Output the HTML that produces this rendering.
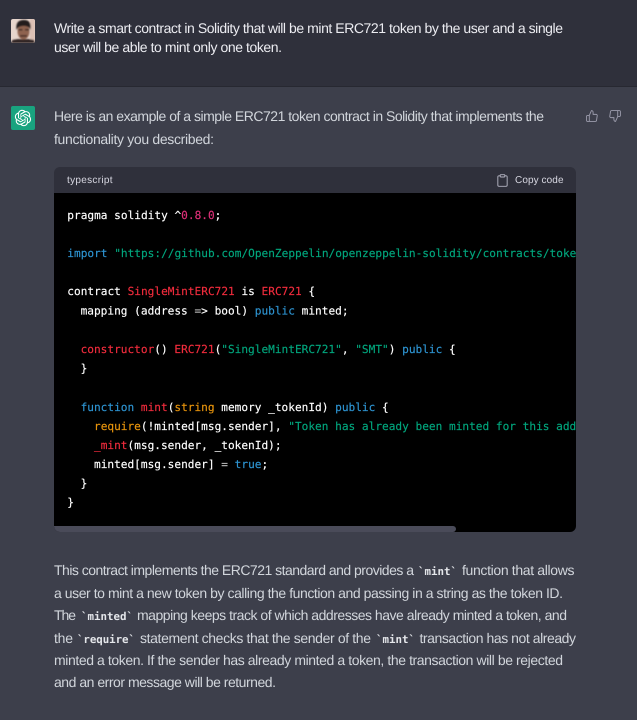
<!DOCTYPE html>
<html><head><meta charset="utf-8"><title>Chat</title>
<style>
html,body{margin:0;padding:0;width:637px;height:720px;overflow:hidden;background:#3d3f4b}
svg{display:block;text-rendering:geometricPrecision}
.s{font-family:"Liberation Sans",sans-serif;font-size:14px;fill:#d1d5db}
.u{fill:#ececf1}
.k{font-family:"DejaVu Sans Mono",monospace;font-size:10.8px;font-weight:700;fill:#e5e7eb}
.c{font-family:"DejaVu Sans Mono",monospace;font-size:11.13px;fill:#fff;white-space:pre;stroke:#fff;stroke-width:.15}
.b{fill:#2e95d3;stroke:#2e95d3}.g{fill:#00a67d;stroke:#00a67d}.r{fill:#f22c3d;stroke:#f22c3d}.p{fill:#df3079;stroke:#df3079}.o{fill:#e9950c;stroke:#e9950c}.q{fill:#b5b5b5;stroke:#b5b5b5}
.h{font-family:"Liberation Sans",sans-serif;font-size:10px;fill:#d9d9e3}
</style></head><body>
<svg width="637" height="720" viewBox="0 0 637 720" xmlns="http://www.w3.org/2000/svg">
<defs>
<filter id="bl" x="-20%" y="-20%" width="140%" height="140%"><feGaussianBlur stdDeviation="0.7"/></filter>
<clipPath id="av"><rect x="11" y="19" width="24" height="24" rx="2"/></clipPath>
</defs>
<rect width="637" height="720" fill="#3d3f4b"/>
<rect width="637" height="86" fill="#2f303b"/>
<rect y="86" width="637" height="1" fill="#272831"/>

<!-- user avatar -->
<g clip-path="url(#av)">
<rect x="11" y="19" width="24" height="24" fill="#e6d5cc"/>
<g filter="url(#bl)">
<rect x="30" y="19" width="5" height="24" fill="#dcc0b4"/>
<ellipse cx="23.5" cy="31.5" rx="6" ry="8" fill="#8f6350"/>
<path d="M16.5 30 C15.5 22 19 20 24 20 C29.5 20 31.5 23 30.5 30 C29.5 27 27 26 24 26 C20 26 18 27 16.5 30Z" fill="#241e1f"/>
<rect x="18.5" y="29" width="4" height="1.4" fill="#2e2020"/>
<rect x="25" y="29" width="4" height="1.4" fill="#2e2020"/>
<rect x="20" y="35" width="7" height="1.8" fill="#4d312b"/>
<path d="M11 43 L12.5 40 C17 39 20 39 23 39.5 C27 39 30 39 34 40 L35 43Z" fill="#2d2321"/>
</g>
</g>
<!-- logo -->
<rect x="11" y="106" width="24" height="24" rx="2" fill="#19a37f"/>
<svg x="14.6" y="109.6" width="16.8" height="16.8" viewBox="0 0 41 41"><path fill="#fff" d="M37.5324 16.8707C37.9808 15.5241 38.1363 14.0974 37.9886 12.6859C37.8409 11.2744 37.3934 9.91076 36.676 8.68622C35.6126 6.83404 33.9882 5.3676 32.0373 4.4985C30.0864 3.62941 27.9098 3.40259 25.8215 3.85078C24.8796 2.7893 23.7219 1.94125 22.4257 1.36341C21.1295 0.785575 19.7249 0.491269 18.3058 0.500197C16.1708 0.495044 14.0893 1.16803 12.3614 2.42214C10.6335 3.67624 9.34853 5.44666 8.6917 7.47815C7.30085 7.76286 5.98686 8.3414 4.8377 9.17505C3.68854 10.0087 2.73073 11.0782 2.02839 12.312C0.956464 14.1591 0.498905 16.2988 0.721698 18.4228C0.944492 20.5467 1.83612 22.5449 3.268 24.1293C2.81966 25.4759 2.66413 26.9026 2.81182 28.3141C2.95951 29.7256 3.40701 31.0892 4.12437 32.3138C5.18791 34.1659 6.8123 35.6322 8.76321 36.5013C10.7141 37.3704 12.8907 37.5973 14.9789 37.1492C15.9208 38.2107 17.0786 39.0587 18.3747 39.6366C19.6709 40.2144 21.0755 40.5087 22.4946 40.4998C24.6307 40.5054 26.7133 39.8321 28.4418 38.5772C30.1704 37.3223 31.4556 35.5506 32.1119 33.5179C33.5027 33.2332 34.8167 32.6547 35.9659 31.821C37.115 30.9874 38.0728 29.9178 38.7752 28.684C39.8458 26.8371 40.3023 24.6979 40.0789 22.5748C39.8556 20.4517 38.9639 18.4544 37.5324 16.8707ZM22.4978 37.8849C20.7443 37.8874 19.0459 37.2733 17.6994 36.1501C17.7601 36.117 17.8666 36.0586 17.936 36.0161L25.9004 31.4156C26.1003 31.3019 26.2663 31.137 26.3813 30.9378C26.4964 30.7386 26.5563 30.5124 26.5549 30.2825V19.0542L29.9213 20.998C29.9389 21.0068 29.9541 21.0198 29.9656 21.0359C29.977 21.052 29.9842 21.0707 29.9867 21.0902V30.3889C29.9842 32.375 29.1946 34.2791 27.7909 35.6841C26.3872 37.0892 24.4838 37.8806 22.4978 37.8849ZM6.39227 31.0064C5.51397 29.4888 5.19742 27.7107 5.49804 25.9832C5.55718 26.0187 5.66048 26.0818 5.73461 26.1244L13.699 30.7248C13.8975 30.8408 14.1233 30.902 14.3532 30.902C14.583 30.902 14.8088 30.8408 15.0073 30.7248L24.731 25.1103V28.9979C24.7321 29.0177 24.7283 29.0376 24.7199 29.0556C24.7115 29.0736 24.6988 29.0893 24.6829 29.1012L16.6317 33.7497C14.9096 34.7416 12.8643 35.0097 10.9447 34.4954C9.02506 33.9811 7.38785 32.7263 6.39227 31.0064ZM4.29707 13.6194C5.17156 12.0998 6.55279 10.9364 8.19885 10.3327C8.19885 10.4013 8.19491 10.5228 8.19491 10.6071V19.808C8.19351 20.0378 8.25334 20.2638 8.36823 20.4629C8.48312 20.6619 8.64893 20.8267 8.84863 20.9404L18.5723 26.5542L15.206 28.4979C15.1894 28.5089 15.1703 28.5155 15.1505 28.5173C15.1307 28.5191 15.1107 28.516 15.0924 28.5082L7.04046 23.8557C5.32135 22.8601 4.06716 21.2235 3.55289 19.3046C3.03862 17.3858 3.30624 15.3413 4.29707 13.6194ZM31.955 20.0556L22.2312 14.4411L25.5976 12.4981C25.6142 12.4872 25.6333 12.4805 25.6531 12.4787C25.6729 12.4769 25.6928 12.4801 25.7111 12.4879L33.7631 17.1364C34.9967 17.849 36.0017 18.8982 36.6606 20.1613C37.3194 21.4244 37.6047 22.849 37.4832 24.2684C37.3617 25.6878 36.8382 27.0432 35.9743 28.1759C35.1103 29.3086 33.9415 30.1717 32.6047 30.6641C32.6047 30.5947 32.6047 30.4733 32.6047 30.3889V21.188C32.6066 20.9586 32.5474 20.7328 32.4332 20.5338C32.319 20.3348 32.154 20.1698 31.955 20.0556ZM35.3055 15.0128C35.2464 14.9765 35.1431 14.9142 35.069 14.8717L27.1045 10.2712C26.906 10.1554 26.6803 10.0943 26.4504 10.0943C26.2206 10.0943 25.9948 10.1554 25.7963 10.2712L16.0726 15.8858V11.9982C16.0715 11.9783 16.0753 11.9585 16.0837 11.9405C16.0921 11.9225 16.1048 11.9068 16.1207 11.8949L24.1719 7.25025C25.4053 6.53903 26.8158 6.19376 28.2383 6.25482C29.6608 6.31589 31.0364 6.78077 32.2044 7.59508C33.3723 8.40939 34.2842 9.53945 34.8334 10.8531C35.3826 12.1667 35.5464 13.6095 35.3055 15.0128ZM14.2424 21.9419L10.8752 19.9981C10.8576 19.9893 10.8423 19.9763 10.8309 19.9602C10.8195 19.9441 10.8122 19.9254 10.8098 19.9058V10.6071C10.8107 9.18295 11.2173 7.78848 11.9819 6.58696C12.7466 5.38544 13.8377 4.42659 15.1275 3.82264C16.4173 3.21869 17.8524 2.99464 19.2649 3.1767C20.6775 3.35876 22.0089 3.93941 23.1034 4.85067C23.0427 4.88379 22.937 4.94215 22.8668 4.98473L14.9024 9.58517C14.7025 9.69878 14.5366 9.86356 14.4215 10.0626C14.3065 10.2616 14.2466 10.4877 14.2479 10.7175L14.2424 21.9419ZM16.071 17.9991L20.4018 15.4978L24.7325 17.9975V22.9985L20.4018 25.4983L16.071 22.9985V17.9991Z"/></svg>

<!-- user text -->
<text class="s u" x="54" y="33" textLength="509" lengthAdjust="spacing">Write a smart contract in Solidity that will be mint ERC721 token by the user and a single</text>
<text class="s u" x="54" y="52" textLength="228" lengthAdjust="spacing">user will be able to mint only one token.</text>

<!-- assistant intro -->
<text class="s" x="54" y="121" textLength="490" lengthAdjust="spacing">Here is an example of a simple ERC721 token contract in Solidity that implements the</text>
<text class="s" x="54" y="144" textLength="160" lengthAdjust="spacing">functionality you described:</text>

<!-- thumbs -->
<g fill="none" stroke="#9c9cac" stroke-width="1.7" stroke-linecap="round" stroke-linejoin="round">
<svg x="585.5" y="109.5" width="13" height="13" viewBox="0 0 24 24" overflow="visible"><path d="M14 9V5a3 3 0 0 0-3-3l-4 9v11h11.28a2 2 0 0 0 2-1.7l1.38-9a2 2 0 0 0-2-2.3zM7 22H4a2 2 0 0 1-2-2v-7a2 2 0 0 1 2-2h3"/></svg>
<svg x="608.5" y="109.5" width="13" height="13" viewBox="0 0 24 24" overflow="visible"><path d="M10 15v4a3 3 0 0 0 3 3l4-9V2H5.72a2 2 0 0 0-2 1.7l-1.38 9a2 2 0 0 0 2 2.3zm7-13h2.67A2.31 2.31 0 0 1 22 4v7a2.31 2.31 0 0 1-2.33 2H17"/></svg>
</g>

<!-- code block -->
<path d="M54 173a6 6 0 0 1 6-6h510a6 6 0 0 1 6 6v20H54z" fill="#2f303b"/>
<text class="h" x="67" y="183" textLength="45.5" lengthAdjust="spacing">typescript</text>
<g fill="none" stroke="#b4b4c2" stroke-width="1.6" stroke-linecap="round" stroke-linejoin="round">
<svg x="495.5" y="173.5" width="14" height="14" viewBox="0 0 24 24" overflow="visible"><path d="M16 4h2a2 2 0 0 1 2 2v14a2 2 0 0 1-2 2H6a2 2 0 0 1-2-2V6a2 2 0 0 1 2-2h2"/><rect x="8" y="2" width="8" height="4" rx="1"/></svg>
</g>
<text class="h" x="515" y="183" textLength="48.5" lengthAdjust="spacing">Copy code</text>
<path d="M54 193h522v333a6 6 0 0 1-6 6H60a6 6 0 0 1-6-6z" fill="#000"/>
<path d="M54 526h399a3 3 0 0 1 0 6H60a6 6 0 0 1-6-6z" fill="#4a4b59"/>

<svg x="54" y="193" width="522" height="333" viewBox="54 193 522 333">
<text class="c" x="67.3" y="219">pragma solidity ^<tspan class="p">0.8.0</tspan>;</text>
<text class="c" x="67.3" y="257"><tspan class="b">import</tspan> <tspan class="g">"https://github.com/OpenZeppelin/openzeppelin-solidity/contracts/token/ERC721/ERC721.sol"</tspan>;</text>
<text class="c" x="67.3" y="295">contract <tspan class="r">SingleMintERC721</tspan> is <tspan class="r">ERC721</tspan> {</text>
<text class="c" x="80.6" y="314.5">mapping (address <tspan class="q">=</tspan>&gt; bool) <tspan class="b">public</tspan> minted;</text>
<text class="c" x="80.6" y="353"><tspan class="r">constructor</tspan>() <tspan class="r">ERC721</tspan>(<tspan class="g">"SingleMintERC721"</tspan>, <tspan class="g">"SMT"</tspan>) <tspan class="b">public</tspan> {</text>
<text class="c" x="80.6" y="372">}</text>
<text class="c" x="80.6" y="411"><tspan class="b">function</tspan> <tspan class="r">mint</tspan>(<tspan class="o">string</tspan> memory _tokenId) <tspan class="b">public</tspan> {</text>
<text class="c" x="94" y="430"><tspan class="o">require</tspan>(!minted[msg.sender], <tspan class="g">"Token has already been minted for this address"</tspan>);</text>
<text class="c" x="94" y="449"><tspan class="r">_mint</tspan>(msg.sender, _tokenId);</text>
<text class="c" x="94" y="468">minted[msg.sender] <tspan class="q">=</tspan> <tspan class="b">true</tspan>;</text>
<text class="c" x="80.6" y="487">}</text>
<text class="c" x="67.3" y="506">}</text>
</svg>

<!-- paragraph -->
<text class="s" x="54" y="575" textLength="360" lengthAdjust="spacing">This contract implements the ERC721 standard and provides a</text>
<text class="k" x="418" y="575">`mint`</text>
<text class="s" x="462" y="575" textLength="112.5" lengthAdjust="spacing">function that allows</text>

<text class="s" x="54" y="598" textLength="509" lengthAdjust="spacing">a user to mint a new token by calling the function and passing in a string as the token ID.</text>

<text class="s" x="54" y="620" textLength="22" lengthAdjust="spacing">The</text>
<text class="k" x="81" y="620" textLength="52" lengthAdjust="spacing">`minted`</text>
<text class="s" x="137" y="620" textLength="430" lengthAdjust="spacing">mapping keeps track of which addresses have already minted a token, and</text>

<text class="s" x="54" y="643" textLength="19" lengthAdjust="spacing">the</text>
<text class="k" x="77" y="643" textLength="58" lengthAdjust="spacing">`require`</text>
<text class="s" x="140" y="643" textLength="231" lengthAdjust="spacing">statement checks that the sender of the</text>
<text class="k" x="376" y="643">`mint`</text>
<text class="s" x="419.5" y="643" textLength="156.5" lengthAdjust="spacing">transaction has not already</text>

<text class="s" x="54" y="665" textLength="509" lengthAdjust="spacing">minted a token. If the sender has already minted a token, the transaction will be rejected</text>
<text class="s" x="54" y="687" textLength="222" lengthAdjust="spacing">and an error message will be returned.</text>
</svg>
</body></html>
